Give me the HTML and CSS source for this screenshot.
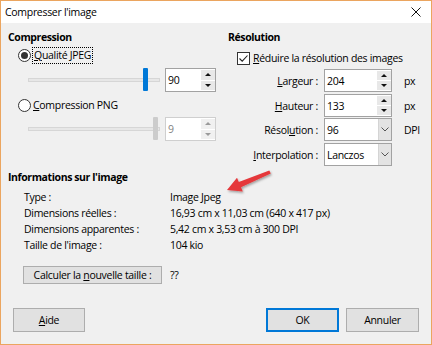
FILE: index.html
```html
<!DOCTYPE html>
<html lang="fr">
<head>
<meta charset="utf-8">
<title>Compresser l'image</title>
<link rel="stylesheet" href="styles.css">
</head>
<body>
<div class="window">
  <div class="titlebar">
    <span class="title">Compresser l'image</span>
    <svg class="close" width="10" height="10" viewBox="0 0 10 10"><path d="M0.5 0.5L9.5 9.5M9.5 0.5L0.5 9.5" stroke="#111" stroke-width="1"/></svg>
  </div>
  <div class="content">
    <div class="top">
      <div class="col-left">
        <div class="heading">Compression</div>
        <div class="radio-row first">
          <span class="radio checked"></span>
          <span class="focus"><u>Q</u>ualité JPEG</span>
        </div>
        <div class="slider-row first">
          <div class="slider"><div class="track"></div><div class="thumb"></div></div>
          <div class="spin"><span class="val">90</span><div class="spin-btns"><span class="sb"><i class="up"></i></span><span class="sb"><i class="down"></i></span></div></div>
        </div>
        <div class="radio-row second">
          <span class="radio"></span>
          <span class="label"><u>C</u>ompression PNG</span>
        </div>
        <div class="slider-row second">
          <div class="slider disabled"><div class="track"></div><div class="thumb"></div></div>
          <div class="spin disabled"><span class="val">9</span><div class="spin-btns"><span class="sb"><i class="up"></i></span><span class="sb"><i class="down"></i></span></div></div>
        </div>
      </div>
      <div class="col-right">
        <div class="heading">Résolution</div>
        <div class="check-row">
          <span class="checkbox"><svg width="11" height="11" viewBox="0 0 11 11"><path d="M1.5 5.5L4.2 8.2L9.5 2.5" fill="none" stroke="#222" stroke-width="1.1"/></svg></span>
          <span class="label"><u>R</u>éduire la résolution des images</span>
        </div>
        <div class="field-row r1">
          <span class="flabel"><u>L</u>argeur :</span>
          <div class="spin wide"><span class="val">204</span><div class="spin-btns"><span class="sb"><i class="up"></i></span><span class="sb"><i class="down"></i></span></div></div>
          <span class="unit">px</span>
        </div>
        <div class="field-row r2">
          <span class="flabel"><u>H</u>auteur :</span>
          <div class="spin wide"><span class="val">133</span><div class="spin-btns"><span class="sb"><i class="up"></i></span><span class="sb"><i class="down"></i></span></div></div>
          <span class="unit">px</span>
        </div>
        <div class="field-row r3">
          <span class="flabel">Résol<u>u</u>tion :</span>
          <div class="combo"><span class="val">96</span><span class="drop"><svg width="8" height="5" viewBox="0 0 8 5"><path d="M0.5 0.5L4 4L7.5 0.5" fill="none" stroke="#555" stroke-width="1"/></svg></span></div>
          <span class="unit">DPI</span>
        </div>
        <div class="field-row r4">
          <span class="flabel"><u>I</u>nterpolation :</span>
          <div class="combo"><span class="val">Lanczos</span><span class="drop"><svg width="8" height="5" viewBox="0 0 8 5"><path d="M0.5 0.5L4 4L7.5 0.5" fill="none" stroke="#555" stroke-width="1"/></svg></span></div>
        </div>
      </div>
    </div>

    <div class="heading info-heading">Informations sur l'image</div>
    <div class="info-grid">
      <span>Type :</span><span>Image Jpeg</span>
      <span>Dimensions réelles :</span><span>16,93 cm x 11,03 cm (640 x 417 px)</span>
      <span>Dimensions apparentes :</span><span>5,42 cm x 3,53 cm à 300 DPI</span>
      <span>Taille de l'image :</span><span>104 kio</span>
    </div>

    <div class="calc-row">
      <button class="btn calc"><span>Calculer la <u>n</u>ouvelle taille :</span></button>
      <span class="qq">??</span>
    </div>

    <div class="bottom-row">
      <button class="btn aide"><span><u>A</u>ide</span></button>
      <span class="spacer"></span>
      <button class="btn ok"><span>OK</span></button>
      <button class="btn cancel"><span>Annuler</span></button>
    </div>
  </div>

  <svg class="arrow" width="60" height="36" viewBox="0 0 60 36">
    <defs>
      <filter id="sh" x="-30%" y="-30%" width="160%" height="160%">
        <feDropShadow dx="1" dy="1.5" stdDeviation="1.2" flood-color="#000" flood-opacity="0.35"/>
      </filter>
    </defs>
    <polygon filter="url(#sh)" fill="#e5383b" points="7,25 22.8,26.4 21,22.2 50.8,8.6 49.3,5.4 18.8,17 17,12.8"/>
  </svg>
</div>
</body>
</html>
```

FILE: styles.css
```css
* { box-sizing: border-box; }
html, body { margin: 0; padding: 0; }
body {
  width: 432px;
  height: 345px;
  overflow: hidden;
  font-family: "Open Sans", "Noto Sans", sans-serif;
  font-size: 10.5px;
  letter-spacing: -0.3px;
  color: #000;
  background: #fff;
}
u { text-decoration: underline; text-underline-offset: 1px; }

.window {
  width: 432px;
  height: 345px;
  border: 1px solid #eba55f;
  display: flex;
  flex-direction: column;
  position: relative;
  background: #f0f0f0;
}
.titlebar {
  height: 22px;
  flex: none;
  background: #fff;
  display: flex;
  align-items: center;
  justify-content: space-between;
  padding: 0 10px 0 4px;
}
.close { display: block; }

.content {
  flex: 1;
  display: flex;
  flex-direction: column;
  padding: 6px 12px 12px 7px;
}
.top { display: flex; }
.col-left { width: 209px; flex: none; }
.col-right { margin-left: 11px; }

.heading {
  font-weight: 700;
  line-height: 16px;
  height: 16px;
  letter-spacing: -0.4px;
}

.radio-row {
  display: flex;
  align-items: center;
  height: 16px;
  margin-left: 10px;
}
.radio-row.first { margin-top: 2px; }
.radio-row.second { margin-top: 5px; }
.radio {
  width: 13px;
  height: 13px;
  border: 1px solid #333;
  border-radius: 50%;
  background: #fff;
  display: flex;
  align-items: center;
  justify-content: center;
  margin-right: 2px;
  flex: none;
}
.radio.checked::after {
  content: "";
  width: 7px;
  height: 7px;
  border-radius: 50%;
  background: #333;
}
.focus {
  outline: 1px dotted #000;
  outline-offset: 0;
  line-height: 15px;
  padding: 0 1px;
}
.radio-row .label { padding-left: 0; }

.slider-row {
  display: flex;
  align-items: center;
  height: 24px;
}
.slider-row.first { margin-top: 5px; }
.slider-row.second { margin-top: 4px; }
.slider {
  width: 132px;
  height: 24px;
  margin-left: 20px;
  position: relative;
  display: flex;
  align-items: center;
}
.track {
  width: 100%;
  height: 4px;
  background: #e7e7e7;
  border: 1px solid #d6d6d6;
}
.thumb {
  position: absolute;
  left: 115px;
  top: 0;
  width: 5px;
  height: 23px;
  background: #0078d7;
  border-radius: 1px;
}
.slider.disabled .thumb {
  left: 125px;
  background: #cccccc;
}

.spin {
  width: 51px;
  height: 24px;
  margin-left: 5px;
  border: 1px solid #a2a2a2;
  background: #fff;
  display: flex;
  align-items: center;
  justify-content: space-between;
  padding-left: 2px;
  flex: none;
}
.spin.wide { width: 68px; margin-left: 6px; height: 23px; }
.spin-btns {
  width: 14px;
  height: 100%;
  display: flex;
  flex-direction: column;
  gap: 1px;
  padding: 1px 0 1px 0;
}
.sb {
  flex: 1;
  background: #e8e8e8;
  display: flex;
  align-items: center;
  justify-content: center;
}
.up, .down {
  display: block;
  width: 0;
  height: 0;
  border-left: 3px solid transparent;
  border-right: 3px solid transparent;
}
.up { border-bottom: 3px solid #111; }
.down { border-top: 3px solid #111; }
.spin.disabled { border-color: #cfcfcf; color: #838383; }
.spin.disabled .sb { background: #f0f0f0; }
.spin.disabled .up { border-bottom-color: #9a9a9a; }
.spin.disabled .down { border-top-color: #9a9a9a; }

.check-row {
  display: flex;
  align-items: center;
  height: 16px;
  margin-top: 5px;
  margin-left: 9px;
}
.checkbox {
  width: 13px;
  height: 13px;
  border: 1px solid #333;
  background: #fff;
  display: flex;
  align-items: center;
  justify-content: center;
  margin-right: 3px;
  flex: none;
}
.checkbox svg { display: block; }

.field-row {
  display: flex;
  align-items: center;
  height: 23px;
}
.field-row.r1 { margin-top: 3px; }
.field-row.r2 { margin-top: 2px; }
.field-row.r3 { margin-top: 1px; }
.field-row.r4 { margin-top: 2px; }
.flabel {
  width: 90px;
  text-align: right;
  flex: none;
}
.unit { margin-left: 12px; }
.combo {
  width: 68px;
  height: 23px;
  margin-left: 6px;
  border: 1px solid #a2a2a2;
  background: #fff;
  display: flex;
  align-items: center;
  justify-content: space-between;
  padding-left: 2px;
  flex: none;
}
.drop {
  width: 13px;
  height: 100%;
  background: #e3e3e3;
  border-left: 1px solid #d4d4d4;
  display: flex;
  align-items: center;
  justify-content: center;
}
.drop svg { display: block; }

.info-heading { margin-top: 3px; }
.info-grid {
  display: grid;
  grid-template-columns: 146px auto;
  grid-auto-rows: 16px;
  line-height: 16px;
  margin-left: 16px;
  margin-top: 4px;
}

.btn {
  font: inherit;
  letter-spacing: inherit;
  color: #000;
  background: #e1e1e1;
  border: 1px solid #adadad;
  padding: 0;
  margin: 0;
  display: flex;
  align-items: center;
  justify-content: center;
}
.calc-row {
  display: flex;
  align-items: center;
  margin-top: 13px;
  margin-left: 15px;
  height: 18px;
}
.calc { width: 139px; height: 18px; }
.qq { margin-left: 8px; }

.bottom-row {
  margin-top: auto;
  display: flex;
  align-items: center;
  height: 24px;
}
.spacer { flex: 1; }
.aide { width: 72px; height: 24px; margin-left: 5px; }
.ok {
  width: 73px;
  height: 24px;
  border-color: #0078d7;
  box-shadow: inset 0 0 0 1px #0078d7;
}
.cancel { width: 73px; height: 24px; margin-left: 7px; }

.arrow {
  position: absolute;
  left: 219px;
  top: 164px;
}
```
